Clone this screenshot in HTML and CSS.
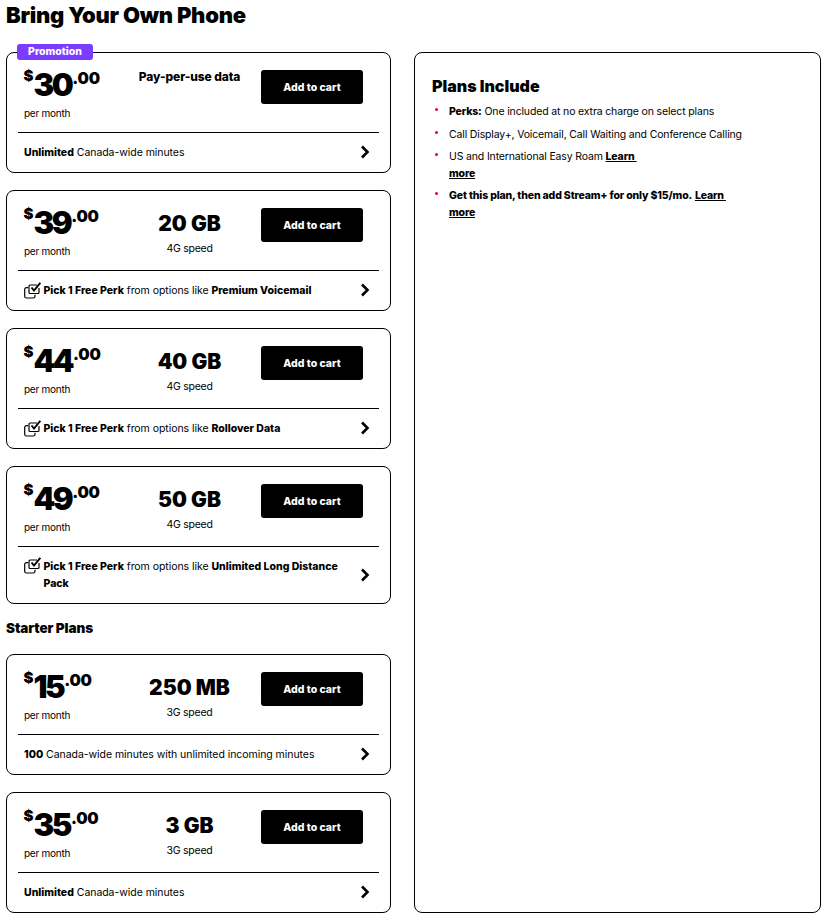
FILE: index.html
```html
<!DOCTYPE html>
<html lang="en">
<head>
<meta charset="utf-8">
<title>Bring Your Own Phone</title>
<link rel="stylesheet" href="styles.css">
</head>
<body>
<h1 class="title">Bring Your Own Phone</h1>
<div class="layout">
  <div class="plans">
    <section class="card">
      <span class="badge">Promotion</span>
      <div class="top">
        <div class="price"><div class="amount"><sup class="cur">$</sup><span class="dollars">30</span><sup class="cents">.00</sup></div><div class="per">per month</div></div>
        <div class="data data-text"><strong>Pay-per-use data</strong></div>
        <button class="cart">Add to cart</button>
      </div>
      <div class="detail"><p><b>Unlimited</b> Canada-wide minutes</p><svg class="chev" viewBox="0 0 10 14"><path d="M2 1.5 7.5 7 2 12.5"/></svg></div>
    </section>
    <section class="card">
      <div class="top">
        <div class="price"><div class="amount"><sup class="cur">$</sup><span class="dollars">39</span><sup class="cents">.00</sup></div><div class="per">per month</div></div>
        <div class="data"><div class="gb">20 GB</div><div class="speed">4G speed</div></div>
        <button class="cart">Add to cart</button>
      </div>
      <div class="detail"><svg class="perk" viewBox="0 0 17 17"><path class="thin" d="M4 5.600H2.500C1.400 5.600.7 6.300.7 7.400V14.200C.7 15.300 1.400 16 2.500 16H9.200C10.300 16 11 15.300 11 14.200V12.800"/><path class="thin" d="M13 3H6C5.400 3 5 3.400 5 4V10.500C5 11.100 5.400 11.500 6 11.500H14C14.600 11.500 15 11.100 15 10.500V6"/><path class="tick" d="M7.500 5.500 10 8.500 16.300.8"/></svg><p class="with-icon"><b>Pick 1 Free Perk</b> from options like <b>Premium Voicemail</b></p><svg class="chev" viewBox="0 0 10 14"><path d="M2 1.5 7.5 7 2 12.5"/></svg></div>
    </section>
    <section class="card">
      <div class="top">
        <div class="price"><div class="amount"><sup class="cur">$</sup><span class="dollars">44</span><sup class="cents">.00</sup></div><div class="per">per month</div></div>
        <div class="data"><div class="gb">40 GB</div><div class="speed">4G speed</div></div>
        <button class="cart">Add to cart</button>
      </div>
      <div class="detail"><svg class="perk" viewBox="0 0 17 17"><path class="thin" d="M4 5.600H2.500C1.400 5.600.7 6.300.7 7.400V14.200C.7 15.300 1.400 16 2.500 16H9.200C10.300 16 11 15.300 11 14.200V12.800"/><path class="thin" d="M13 3H6C5.400 3 5 3.400 5 4V10.500C5 11.100 5.400 11.500 6 11.500H14C14.600 11.500 15 11.100 15 10.500V6"/><path class="tick" d="M7.500 5.500 10 8.500 16.300.8"/></svg><p class="with-icon"><b>Pick 1 Free Perk</b> from options like <b>Rollover Data</b></p><svg class="chev" viewBox="0 0 10 14"><path d="M2 1.5 7.5 7 2 12.5"/></svg></div>
    </section>
    <section class="card card-tall">
      <div class="top">
        <div class="price"><div class="amount"><sup class="cur">$</sup><span class="dollars">49</span><sup class="cents">.00</sup></div><div class="per">per month</div></div>
        <div class="data"><div class="gb">50 GB</div><div class="speed">4G speed</div></div>
        <button class="cart">Add to cart</button>
      </div>
      <div class="detail detail-tall"><svg class="perk" viewBox="0 0 17 17"><path class="thin" d="M4 5.600H2.500C1.400 5.600.7 6.300.7 7.400V14.200C.7 15.300 1.400 16 2.500 16H9.200C10.300 16 11 15.300 11 14.200V12.800"/><path class="thin" d="M13 3H6C5.400 3 5 3.400 5 4V10.500C5 11.100 5.400 11.500 6 11.500H14C14.600 11.500 15 11.100 15 10.500V6"/><path class="tick" d="M7.500 5.500 10 8.500 16.300.8"/></svg><p class="with-icon"><b>Pick 1 Free Perk</b> from options like <b>Unlimited Long Distance Pack</b></p><svg class="chev" viewBox="0 0 10 14"><path d="M2 1.5 7.5 7 2 12.5"/></svg></div>
    </section>
    <h2 class="starter">Starter Plans</h2>
    <section class="card">
      <div class="top">
        <div class="price"><div class="amount"><sup class="cur">$</sup><span class="dollars">15</span><sup class="cents">.00</sup></div><div class="per">per month</div></div>
        <div class="data"><div class="gb">250 MB</div><div class="speed">3G speed</div></div>
        <button class="cart">Add to cart</button>
      </div>
      <div class="detail"><p><b>100</b> Canada-wide minutes with unlimited incoming minutes</p><svg class="chev" viewBox="0 0 10 14"><path d="M2 1.5 7.5 7 2 12.5"/></svg></div>
    </section>
    <section class="card">
      <div class="top">
        <div class="price"><div class="amount"><sup class="cur">$</sup><span class="dollars">35</span><sup class="cents">.00</sup></div><div class="per">per month</div></div>
        <div class="data"><div class="gb">3 GB</div><div class="speed">3G speed</div></div>
        <button class="cart">Add to cart</button>
      </div>
      <div class="detail"><p><b>Unlimited</b> Canada-wide minutes</p><svg class="chev" viewBox="0 0 10 14"><path d="M2 1.5 7.5 7 2 12.5"/></svg></div>
    </section>
  </div>
  <aside class="panel">
    <h2 class="panel-title">Plans Include</h2>
    <ul class="list">
      <li><b>Perks:</b> One included at no extra charge on select plans</li>
      <li>Call Display+, Voicemail, Call Waiting and Conference Calling</li>
      <li>US and International Easy Roam <a href="#">Learn&nbsp;<br>more</a></li>
      <li><b>Get this plan, then add Stream+ for only $15/mo.</b> <a href="#">Learn&nbsp;<br>more</a></li>
    </ul>
  </aside>
</div>
</body>
</html>
```
FILE: styles.css
```css
* { box-sizing: border-box; }
html, body { margin: 0; padding: 0; }
body { background: #fff; color: #000; font-family: Inter, "Liberation Sans", sans-serif; width: 828px; height: 922px; overflow: hidden; padding: 0 7px 0 6px; }
.title { margin: 0; height: 52px; padding-top: 2px; font-size: 22px; line-height: 26px; font-weight: 900; letter-spacing: -0.25px; }
.layout { display: flex; gap: 23px; align-items: stretch; }
.plans { width: 385px; display: flex; flex-direction: column; gap: 17px; }
.card { position: relative; border: 1px solid #000; border-radius: 8px; height: 121px; padding: 0 11px; }
.card-tall { height: 138px; }
.badge { position: absolute; left: 10px; top: -9px; width: 76px; height: 16px; border-radius: 3px; background: #7c3cff; color: #fff; font-size: 10.5px; line-height: 16px; font-weight: 800; text-align: center; }
.top { height: 80px; border-bottom: 1px solid #000; display: grid; grid-template-columns: 94px 143px 102px; padding-left: 6px; }
.price { padding-top: 12px; }
.amount { display: flex; align-items: flex-start; height: 38px; font-weight: 900; }
.cur { margin: 3px 0 0 -0.5px; font-size: 15px; line-height: 16px; font-weight: 900; }
.dollars { font-size: 31px; line-height: 40px; letter-spacing: -2.5px; }
.cents { margin: 3px 0 0 1px; font-size: 16px; line-height: 20px; font-weight: 900; letter-spacing: -0.2px; }
.per { margin-top: 3px; font-size: 10px; line-height: 14px; letter-spacing: -0.25px; }
.data { text-align: center; padding-top: 20px; }
.data-text { padding-top: 15px; font-size: 12px; line-height: 18px; white-space: nowrap; }
.data-text strong { font-weight: 800; letter-spacing: -0.1px; }
.gb { font-size: 21px; line-height: 26px; font-weight: 900; white-space: nowrap; }
.speed { margin-top: 5px; font-size: 10.5px; line-height: 14px; letter-spacing: -0.25px; }
.cart { align-self: start; margin-top: 17px; width: 102px; height: 34px; border: 0; border-radius: 3px; background: #000; color: #fff; font: 800 10.5px/36px Inter, "Liberation Sans", sans-serif; padding: 0; }
.detail { height: 39px; display: flex; align-items: center; padding: 0 9px 0 6px; font-size: 10.5px; line-height: 17px; letter-spacing: -0.05px; }
.detail p { margin: 0; flex: 1; }
.detail b { font-weight: 800; letter-spacing: 0; }
.with-icon { padding-left: 2.5px; }
.chev { width: 10px; height: 14px; flex: none; margin-top: -1px; }
.chev path { fill: none; stroke: #000; stroke-width: 2.6; }
.perk { width: 17px; height: 17px; flex: none; }
.thin { fill: none; stroke: #000; stroke-width: 1.2; }
.tick { fill: none; stroke: #000; stroke-width: 1.9; }
.detail-tall { height: 56px; }
.detail-tall .perk { align-self: flex-start; margin-top: 10px; }
.starter { margin: -1px 0 1px; height: 16px; font-size: 13.5px; line-height: 16px; font-weight: 900; letter-spacing: -0.1px; }
.panel { width: 407px; height: 861px; border: 1px solid #000; border-radius: 8px; padding: 22px 17px 0; }
.panel-title { margin: 0; font-size: 16px; line-height: 22px; font-weight: 900; }
.list { margin: 6.2px 0 0; padding: 0 0 0 17px; list-style: none; width: 320px; font-size: 10.5px; line-height: 17px; letter-spacing: -0.15px; }
.list li { position: relative; margin-bottom: 5.4px; }
.list li::before { content: ""; position: absolute; left: -14px; top: 5px; width: 3px; height: 3px; border-radius: 50%; background: #e6003c; }
.list b { font-weight: 800; }
.list a { color: #000; font-weight: 800; text-decoration: underline; }
```
